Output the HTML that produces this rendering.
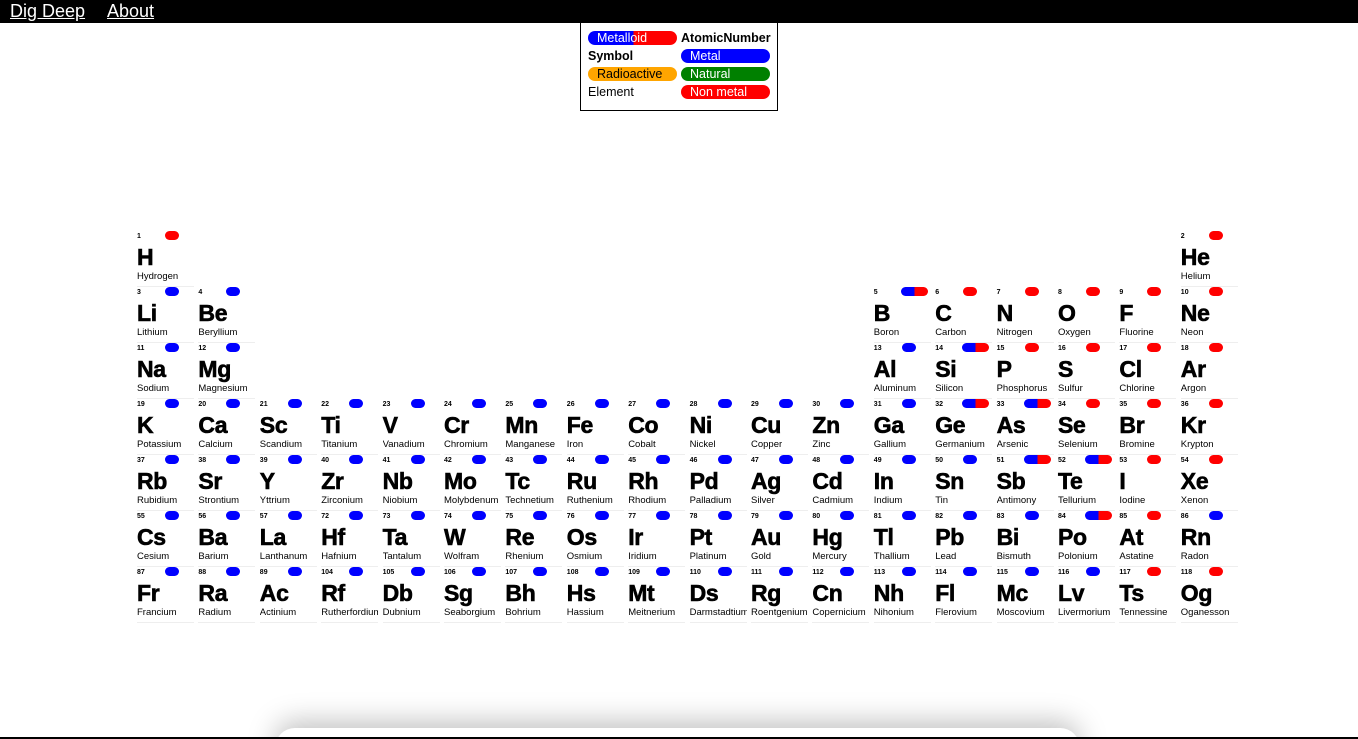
<!DOCTYPE html>
<html><head><meta charset="utf-8"><style>
html,body{margin:0;width:1358px;height:739px;overflow:hidden}
body{background:#fff;font-family:"Liberation Sans",Arial,sans-serif;position:relative}
.hdr{position:absolute;left:0;top:0;width:1358px;height:23px;background:#000}
.hdr a{position:absolute;top:0;color:#fff;font-size:18px;text-decoration:underline;line-height:22px}
.leg{position:absolute;left:580px;top:22px;width:196px;height:87px;border:1px solid #000;font-size:12.5px}
.lg{position:absolute;height:14px;line-height:14px;width:89px;border-radius:7px;color:#fff;box-sizing:border-box}
.c{position:absolute;width:57px;height:55px;border-bottom:1px solid #eee}
.n{position:absolute;left:0;top:2px;font-size:7px;font-weight:bold}
.s{position:absolute;left:0;top:13px;font-size:23px;font-weight:900;letter-spacing:-0.3px;-webkit-text-stroke:0.6px #000}
.m{position:absolute;left:0;top:40px;font-size:9.5px;white-space:nowrap;overflow:hidden;width:57px}
.p{position:absolute;top:0;left:28px;width:14px;height:9px;border-radius:5px}
.p2{left:27px;width:27px;background:linear-gradient(90deg,#00f 50%,#f00 50%)}
.shadow{position:absolute;left:275px;top:728px;width:805px;height:40px;border-radius:20px;background:#fff;box-shadow:0 -6px 28px rgba(0,0,0,.25)}
</style></head><body>
<div class="hdr"><a style="left:10px">Dig Deep</a><a style="left:107px">About</a></div>
<div class="leg">
<div class="lg" style="left:7px;top:8px;background:linear-gradient(90deg,#00f 51%,#f00 51%);padding-left:9px">Metalloid</div>
<div style="position:absolute;left:100px;top:8px;font-weight:bold">AtomicNumber</div>
<div style="position:absolute;left:7px;top:26px;font-weight:bold">Symbol</div>
<div class="lg" style="left:100px;top:26px;background:#00f;padding-left:9px">Metal</div>
<div class="lg" style="left:7px;top:44px;background:orange;color:#000;padding-left:9px">Radioactive</div>
<div class="lg" style="left:100px;top:44px;background:green;padding-left:9px">Natural</div>
<div style="position:absolute;left:7px;top:62px">Element</div>
<div class="lg" style="left:100px;top:62px;background:red;padding-left:9px">Non metal</div>
</div>
<div id="t"></div>
<div class="shadow"></div>
<div style="position:absolute;left:0;top:737px;width:1358px;height:2px;background:#000"></div>
<script>
var D=[[1,"H","Hydrogen",1,1],[2,"He","Helium",1,18],
[3,"Li","Lithium",2,1],[4,"Be","Beryllium",2,2],[5,"B","Boron",2,13],[6,"C","Carbon",2,14],[7,"N","Nitrogen",2,15],[8,"O","Oxygen",2,16],[9,"F","Fluorine",2,17],[10,"Ne","Neon",2,18],
[11,"Na","Sodium",3,1],[12,"Mg","Magnesium",3,2],[13,"Al","Aluminum",3,13],[14,"Si","Silicon",3,14],[15,"P","Phosphorus",3,15],[16,"S","Sulfur",3,16],[17,"Cl","Chlorine",3,17],[18,"Ar","Argon",3,18]];
var r4="K Potassium,Ca Calcium,Sc Scandium,Ti Titanium,V Vanadium,Cr Chromium,Mn Manganese,Fe Iron,Co Cobalt,Ni Nickel,Cu Copper,Zn Zinc,Ga Gallium,Ge Germanium,As Arsenic,Se Selenium,Br Bromine,Kr Krypton";
var r5="Rb Rubidium,Sr Strontium,Y Yttrium,Zr Zirconium,Nb Niobium,Mo Molybdenum,Tc Technetium,Ru Ruthenium,Rh Rhodium,Pd Palladium,Ag Silver,Cd Cadmium,In Indium,Sn Tin,Sb Antimony,Te Tellurium,I Iodine,Xe Xenon";
var r6="Cs Cesium,Ba Barium,La Lanthanum,Hf Hafnium,Ta Tantalum,W Wolfram,Re Rhenium,Os Osmium,Ir Iridium,Pt Platinum,Au Gold,Hg Mercury,Tl Thallium,Pb Lead,Bi Bismuth,Po Polonium,At Astatine,Rn Radon";
var r7="Fr Francium,Ra Radium,Ac Actinium,Rf Rutherfordium,Db Dubnium,Sg Seaborgium,Bh Bohrium,Hs Hassium,Mt Meitnerium,Ds Darmstadtium,Rg Roentgenium,Cn Copernicium,Nh Nihonium,Fl Flerovium,Mc Moscovium,Lv Livermorium,Ts Tennessine,Og Oganesson";
var nums={4:[19,20,21,22,23,24,25,26,27,28,29,30,31,32,33,34,35,36],5:[37,38,39,40,41,42,43,44,45,46,47,48,49,50,51,52,53,54],6:[55,56,57,72,73,74,75,76,77,78,79,80,81,82,83,84,85,86],7:[87,88,89,104,105,106,107,108,109,110,111,112,113,114,115,116,117,118]};
[[4,r4],[5,r5],[6,r6],[7,r7]].forEach(function(a){a[1].split(",").forEach(function(x,i){var q=x.split(" ");D.push([nums[a[0]][i],q[0],q[1],a[0],i+1]);});});
var red=[1,2,6,7,8,9,10,15,16,17,18,34,35,36,53,54,85,117,118],mid=[5,14,32,33,51,52,84];
var h="";D.forEach(function(e){var x=137+(e[4]-1)*61.4,y=231+(e[3]-1)*56;
var pc=mid.indexOf(e[0])>=0?'p p2':'p" style="background:'+(red.indexOf(e[0])>=0?'#f00':'#00f');
h+='<div class="c" style="left:'+x+'px;top:'+y+'px"><div class="n">'+e[0]+'</div><div class="'+pc+'"></div><div class="s">'+e[1]+'</div><div class="m">'+e[2]+'</div></div>';});
document.getElementById("t").innerHTML=h;
</script>
</body></html>
